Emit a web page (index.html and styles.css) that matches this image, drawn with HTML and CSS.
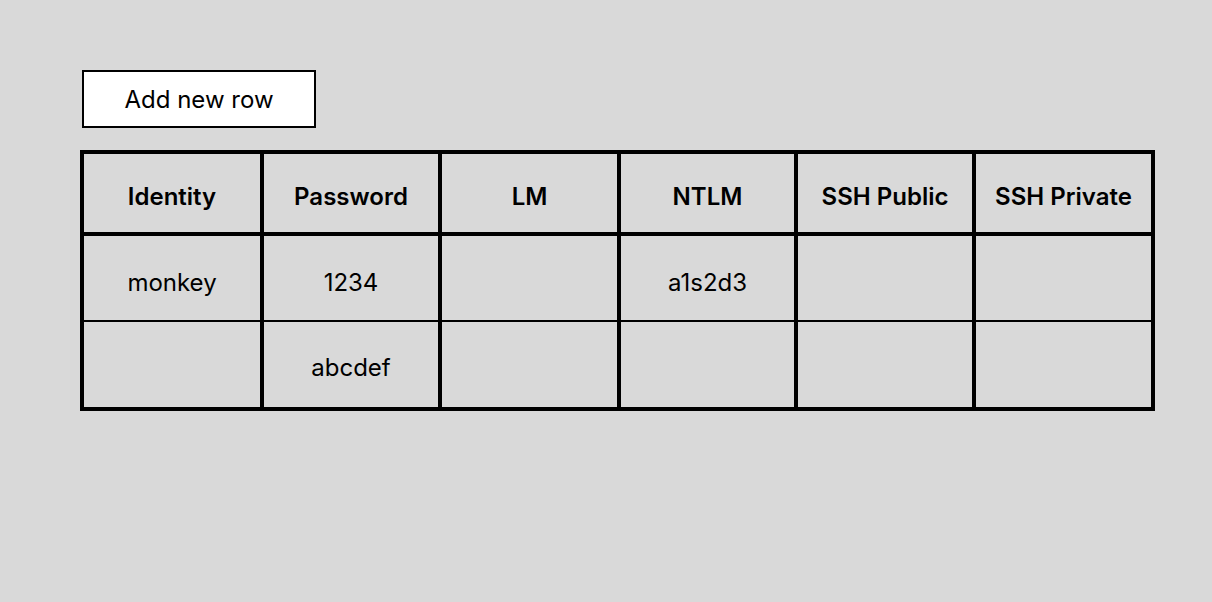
FILE: index.html
```html
<!DOCTYPE html>
<html>
<head>
<meta charset="utf-8">
<link rel="stylesheet" href="styles.css">
</head>
<body>
<main class="page">
  <button class="add-btn">Add new row</button>
  <div class="grid">
    <div class="cell head">Identity</div>
    <div class="cell head">Password</div>
    <div class="cell head">LM</div>
    <div class="cell head">NTLM</div>
    <div class="cell head">SSH Public</div>
    <div class="cell head">SSH Private</div>

    <div class="cell row1">monkey</div>
    <div class="cell row1">1234</div>
    <div class="cell row1"></div>
    <div class="cell row1">a1s2d3</div>
    <div class="cell row1"></div>
    <div class="cell row1"></div>

    <div class="cell row2"></div>
    <div class="cell row2">abcdef</div>
    <div class="cell row2 tick"></div>
    <div class="cell row2 tick"></div>
    <div class="cell row2 tick"></div>
    <div class="cell row2 tick"></div>
  </div>
</main>
</body>
</html>
```
FILE: styles.css
```css
html, body {
  margin: 0;
  padding: 0;
  background: #d9d9d9;
}
body {
  font-family: Inter, "Liberation Sans", sans-serif;
  color: #000;
}
.page {
  padding: 70px 0 0 80px;
  display: flex;
  flex-direction: column;
  align-items: flex-start;
}
.add-btn {
  margin-left: 2px;
  width: 234px;
  height: 58px;
  box-sizing: border-box;
  background: #fff;
  border: 2px solid #000;
  font-family: Inter, "Liberation Sans", sans-serif;
  font-size: 24px;
  color: #000;
  padding: 0 0 0 0;
  cursor: pointer;
}
.grid {
  margin-top: 22px;
  display: grid;
  grid-template-columns: 180px 178px 179px 177px 178px 179px;
  grid-template-rows: 82px 86px 89px;
  border-top: 4px solid #000;
  border-left: 4px solid #000;
}
.cell {
  box-sizing: border-box;
  border-right: 4px solid #000;
  display: flex;
  align-items: center;
  justify-content: center;
  font-size: 24px;
  position: relative;
}
.head {
  border-bottom: 4px solid #000;
  font-weight: 600;
  padding-top: 6px;
}
.row1 {
  border-bottom: 2px solid #000;
  padding-top: 8px;
}
.row2 {
  border-bottom: 4px solid #000;
  padding-top: 5px;
}
.tick::after {
  content: "";
  position: absolute;
  right: -4px;
  bottom: -9px;
  width: 4px;
  height: 5px;
  background: #000;
}
```
